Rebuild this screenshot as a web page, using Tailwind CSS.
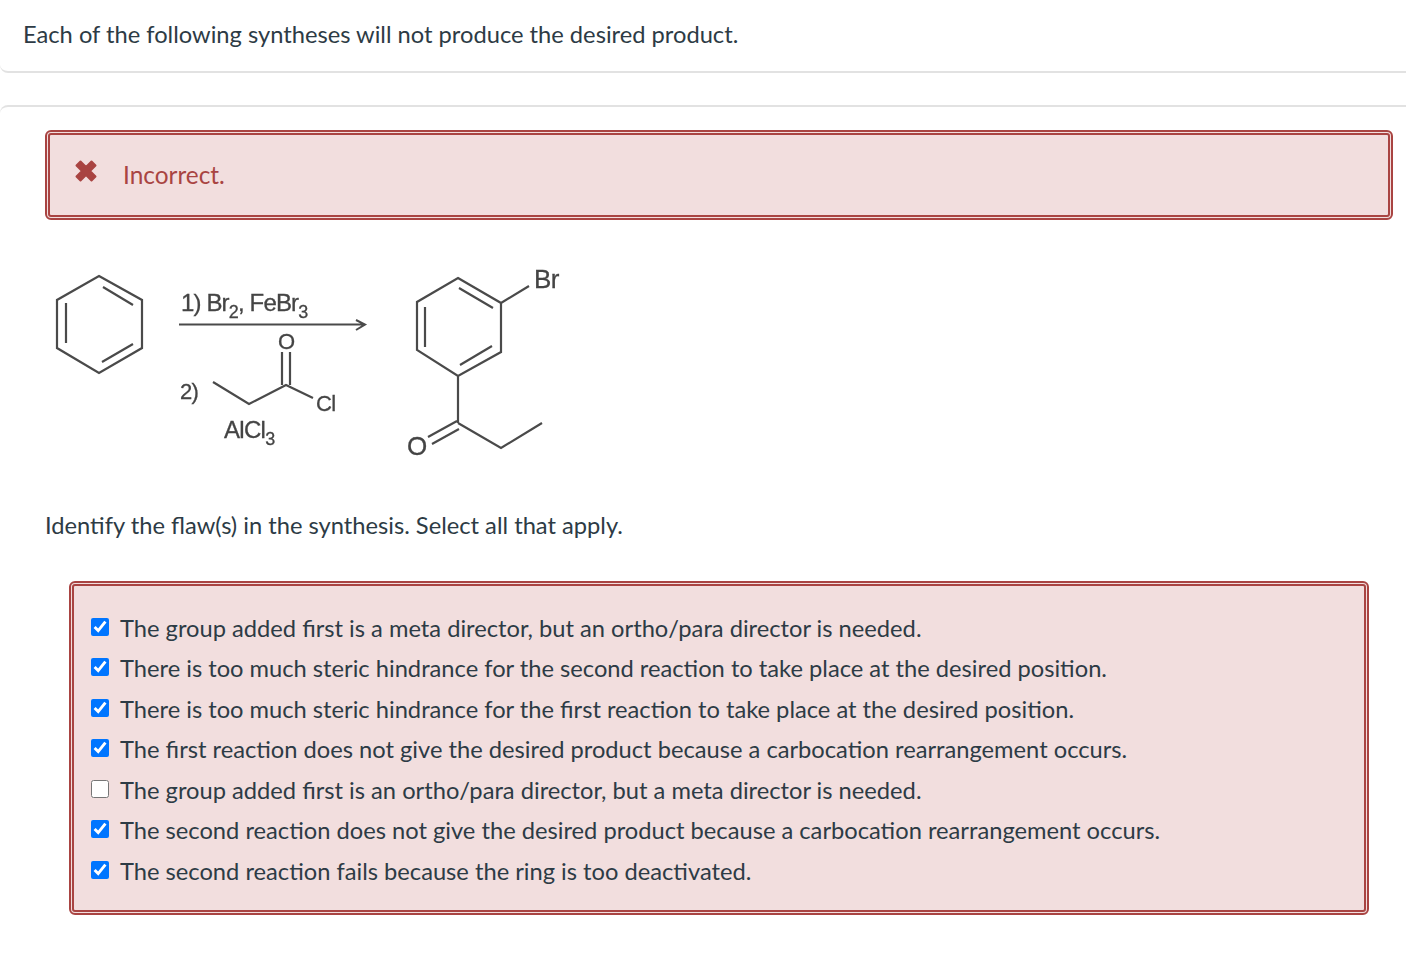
<!DOCTYPE html>
<html lang="en">
<head>
  <meta charset="UTF-8">
  <title>Synthesis question</title>
  <script src="https://cdn.jsdelivr.net/npm/@tailwindcss/browser@4"></script>
</head>
<body class="bg-white text-[#2d3b45] font-['Lato',sans-serif] text-[23.700px] overflow-hidden">
  <!-- Question prompt -->
  <div class="h-[73px] pl-[23px] pt-[16px] leading-[36px] border-b-2 border-[#e2e2e2] rounded-bl-lg">
    Each of the following syntheses will not produce the desired product.
  </div>

  <!-- Answer card -->
  <div class="mt-[32px] pt-[23px] pl-[45px] pr-[13px] border-t-2 border-[#e2e2e2] rounded-tl-lg">
    <div class="h-[90px] flex items-center border-[5px] border-double border-[#a94442] rounded-md bg-[#f2dede] text-[#a94442] text-[24.400px] pl-[24px]">
      <svg class="w-[24px] h-[24px] -mt-[9px] mr-[25px]" viewBox="0 0 24 24"><path d="M2.500 6.500 6.500 2.500 12 8 17.500 2.500 21.500 6.500 16 12 21.500 17.500 17.500 21.500 12 16 6.500 21.500 2.500 17.500 8 12Z" fill="#a94442" stroke="#a94442" stroke-width="2" stroke-linejoin="round"/></svg>
      <span class="leading-[36px]">Incorrect.</span>
    </div>

    <!-- Reaction scheme -->
    <svg class="block -ml-[5px] mt-[40px] w-[520px] h-[200px] blur-[0.4px] font-['Liberation_Sans',sans-serif]" viewBox="40 260 520 200" fill="none" stroke="#4a4a4a" stroke-width="2.200">
      <path d="M99 276 142 300V348L99 373 57 348V300Z M66 303V343 M103 287 133 305 M102 362 133 344"/>
      <path d="M179 324.500H364 M356 320 365 324.500 356 330" stroke-width="2"/>
      <path d="M213 382 249 404 286 385 313 398 M282 352V385 M290 352V385"/>
      <path d="M458 278 501 303V352L458 376 417 350V302Z M425 307V347 M459 288 493 308 M460 365 492 346 M501 303 529 286 M458 376V423 M458 423 501 448 542 423 M457 421 428 437 M459 429 432 444"/>
      <g fill="#444" stroke="#444" stroke-width="0.300" font-size="22" letter-spacing="-0.700">
        <text x="181" y="311" font-size="24" letter-spacing="-0.850">1) Br<tspan font-size="18" dy="7">2</tspan><tspan dy="-7">, FeBr</tspan><tspan font-size="18" dy="7">3</tspan></text>
        <text x="278" y="349">O</text>
        <text x="180" y="399">2)</text>
        <text x="316" y="411">Cl</text>
        <text x="224" y="438" font-size="24">AlCl<tspan font-size="18" dy="7">3</tspan></text>
        <text x="534" y="288" font-size="26">Br</text>
        <text x="407" y="455" font-size="26">O</text>
      </g>
    </svg>

    <p class="mt-[47px] leading-[36px]">Identify the flaw(s) in the synthesis. Select all that apply.</p>

    <!-- Options -->
    <div class="ml-[24px] mr-[24px] mt-[38px] h-[334px] border-[5px] border-double border-[#a94442] rounded-md bg-[#f2dede] pl-[16.500px] pt-[21.500px] leading-[40.500px]">
      <label class="flex items-center"><input type="checkbox" checked class="w-[18px] h-[18px] m-0 -mt-[2px] mr-[11.500px] accent-[#0075ff]">The group added first is a meta director, but an ortho/para director is needed.</label>
      <label class="flex items-center"><input type="checkbox" checked class="w-[18px] h-[18px] m-0 -mt-[2px] mr-[11.500px] accent-[#0075ff]">There is too much steric hindrance for the second reaction to take place at the desired position.</label>
      <label class="flex items-center"><input type="checkbox" checked class="w-[18px] h-[18px] m-0 -mt-[2px] mr-[11.500px] accent-[#0075ff]">There is too much steric hindrance for the first reaction to take place at the desired position.</label>
      <label class="flex items-center"><input type="checkbox" checked class="w-[18px] h-[18px] m-0 -mt-[2px] mr-[11.500px] accent-[#0075ff]">The first reaction does not give the desired product because a carbocation rearrangement occurs.</label>
      <label class="flex items-center"><input type="checkbox" class="w-[18px] h-[18px] m-0 -mt-[2px] mr-[11.500px] accent-[#0075ff]">The group added first is an ortho/para director, but a meta director is needed.</label>
      <label class="flex items-center"><input type="checkbox" checked class="w-[18px] h-[18px] m-0 -mt-[2px] mr-[11.500px] accent-[#0075ff]">The second reaction does not give the desired product because a carbocation rearrangement occurs.</label>
      <label class="flex items-center"><input type="checkbox" checked class="w-[18px] h-[18px] m-0 -mt-[2px] mr-[11.500px] accent-[#0075ff]">The second reaction fails because the ring is too deactivated.</label>
    </div>
  </div>
</body>
</html>
